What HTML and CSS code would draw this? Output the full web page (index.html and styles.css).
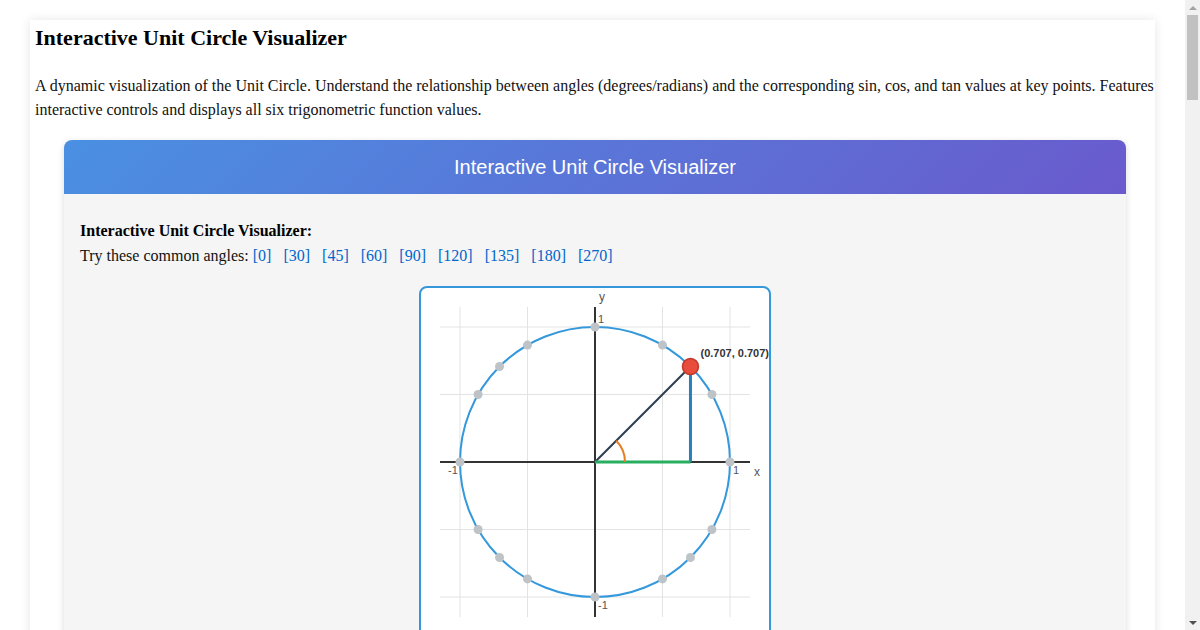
FILE: index.html
```html
<!DOCTYPE html>
<html lang="en">
<head>
<meta charset="utf-8">
<title>Interactive Unit Circle Visualizer</title>
<link rel="stylesheet" href="styles.css">
</head>
<body>
<div class="page">
  <h1 class="title">Interactive Unit Circle Visualizer</h1>
  <p class="intro">A dynamic visualization of the Unit Circle. Understand the relationship between angles (degrees/radians) and the corresponding sin, cos, and tan values at key points. Features interactive controls and displays all six trigonometric function values.</p>

  <div class="widget">
    <div class="widget-header">Interactive Unit Circle Visualizer</div>
    <div class="widget-body">
      <div class="prompt">
        <div class="prompt-title">Interactive Unit Circle Visualizer:</div>
        <div class="prompt-line">Try these common angles: <a href="#" class="angle">[0]</a> <a href="#" class="angle">[30]</a> <a href="#" class="angle">[45]</a> <a href="#" class="angle">[60]</a> <a href="#" class="angle">[90]</a> <a href="#" class="angle">[120]</a> <a href="#" class="angle">[135]</a> <a href="#" class="angle">[180]</a> <a href="#" class="angle">[270]</a></div>
      </div>

      <div class="circle-box">
        <svg class="circle-svg" width="348" height="348" viewBox="0 0 348 348" xmlns="http://www.w3.org/2000/svg">
          <g class="grid">
            <line x1="39" y1="19" x2="39" y2="329"/>
            <line x1="106.5" y1="19" x2="106.5" y2="329"/>
            <line x1="241.5" y1="19" x2="241.5" y2="329"/>
            <line x1="309" y1="19" x2="309" y2="329"/>
            <line x1="19" y1="39" x2="329" y2="39"/>
            <line x1="19" y1="106.5" x2="329" y2="106.5"/>
            <line x1="19" y1="241.5" x2="329" y2="241.5"/>
            <line x1="19" y1="309" x2="329" y2="309"/>
          </g>
          <g class="axes">
            <line x1="19" y1="174" x2="329" y2="174"/>
            <line x1="174" y1="19" x2="174" y2="329"/>
          </g>
          <circle class="unit" cx="174" cy="174" r="135"/>
          <g class="dots">
            <circle cx="309" cy="174" r="4.5"/>
            <circle cx="290.91" cy="106.5" r="4.5"/>
            <circle cx="269.46" cy="78.54" r="4.5"/>
            <circle cx="241.5" cy="57.09" r="4.5"/>
            <circle cx="174" cy="39" r="4.5"/>
            <circle cx="106.5" cy="57.09" r="4.5"/>
            <circle cx="78.54" cy="78.54" r="4.5"/>
            <circle cx="57.09" cy="106.5" r="4.5"/>
            <circle cx="39" cy="174" r="4.5"/>
            <circle cx="57.09" cy="241.5" r="4.5"/>
            <circle cx="78.54" cy="269.46" r="4.5"/>
            <circle cx="106.5" cy="290.91" r="4.5"/>
            <circle cx="174" cy="309" r="4.5"/>
            <circle cx="241.5" cy="290.91" r="4.5"/>
            <circle cx="269.46" cy="269.46" r="4.5"/>
            <circle cx="290.91" cy="241.5" r="4.5"/>
          </g>
          <line class="radius" x1="174" y1="174" x2="269.46" y2="78.54"/>
          <line class="sin" x1="269.46" y1="174" x2="269.46" y2="78.54"/>
          <line class="cos" x1="174" y1="174" x2="269.46" y2="174"/>
          <path class="arc" d="M204 174 A30 30 0 0 0 195.21 152.79"/>
          <circle class="point" cx="269.46" cy="78.54" r="8"/>
          <text class="pt-label" x="279.5" y="68.5">(0.707, 0.707)</text>
          <text class="ax-label" x="333" y="188">x</text>
          <text class="ax-label" x="178" y="13">y</text>
          <text class="tick" x="177" y="35">1</text>
          <text class="tick" x="177" y="321">-1</text>
          <text class="tick" x="312" y="186">1</text>
          <text class="tick" x="27" y="186">-1</text>
        </svg>
      </div>

      <div class="controls">
        <label class="ctrl-label">Angle (degrees): <span class="ctrl-value">45°</span></label>
        <div class="slider"><div class="slider-fill"></div></div>
        <table class="values">
          <tr><th>sin θ</th><td>0.707</td><th>csc θ</th><td>1.414</td></tr>
          <tr><th>cos θ</th><td>0.707</td><th>sec θ</th><td>1.414</td></tr>
          <tr><th>tan θ</th><td>1.000</td><th>cot θ</th><td>1.000</td></tr>
        </table>
      </div>
    </div>
  </div>
</div>

<div class="scrollbar" aria-hidden="true">
  <div class="sb-arrow sb-up"></div>
  <div class="sb-track"><div class="sb-thumb"></div></div>
  <div class="sb-arrow sb-down"></div>
</div>
</body>
</html>
```

FILE: styles.css
```css
html, body {
  margin: 0;
  padding: 0;
  background: #ffffff;
}

body {
  padding: 20px 45px 20px 30px;
  font-family: "Liberation Serif", "Times New Roman", serif;
  color: #111;
}

.page {
  background: #fff;
  padding: 5px 0 40px 5px;
  box-shadow: 0 0 10px rgba(0, 0, 0, 0.1);
}

.title {
  margin: 0 0 24px 0;
  font-size: 22px;
  line-height: 25px;
  font-weight: bold;
  color: #000;
}

.intro {
  margin: 0;
  font-size: 16px;
  line-height: 24px;
  color: #111;
}

.widget {
  margin: 18px 29px 0 29px;
  border-radius: 8px;
  background: #f5f5f5;
  box-shadow: 0 2px 6px rgba(0, 0, 0, 0.15);
}

.widget-header {
  background: linear-gradient(135deg, #4a90e2 0%, #6a5acd 100%);
  color: #fff;
  font-family: "Liberation Sans", Arial, sans-serif;
  font-size: 20px;
  line-height: 24px;
  padding: 15px 20px;
  text-align: center;
  border-radius: 8px 8px 0 0;
}

.widget-body {
  padding: 24px 16px 40px 16px;
  min-height: 3900px;
}

.prompt {
  font-size: 16px;
  line-height: 25px;
  color: #111;
}

.prompt-title {
  font-weight: bold;
  color: #000;
}

.angle {
  color: #0066cc;
  text-decoration: none;
  margin: 0 4px;
}

.angle:first-child {
  margin-left: 0;
}

.circle-box {
  width: 348px;
  margin: 18px auto 0 auto;
  border: 2px solid #3498db;
  border-radius: 8px;
  background: #fff;
  display: flex;
}

.circle-svg {
  display: block;
}

.grid line {
  stroke: #e3e3e3;
  stroke-width: 1;
}

.axes line {
  stroke: #333;
  stroke-width: 2;
}

.unit {
  fill: none;
  stroke: #3498db;
  stroke-width: 2;
}

.dots circle {
  fill: #bdc3c7;
}

.radius {
  stroke: #2c3e50;
  stroke-width: 2;
}

.sin {
  stroke: #2980b9;
  stroke-width: 3;
}

.cos {
  stroke: #27ae60;
  stroke-width: 3;
}

.arc {
  fill: none;
  stroke: #e67e22;
  stroke-width: 2;
}

.point {
  fill: #e74c3c;
  stroke: #c0392b;
  stroke-width: 1.5;
}

.pt-label {
  font-family: "Liberation Sans", Arial, sans-serif;
  font-size: 11px;
  font-weight: bold;
  fill: #333;
}

.ax-label {
  font-family: "Liberation Sans", Arial, sans-serif;
  font-size: 12px;
  fill: #555;
}

.tick {
  font-family: "Liberation Sans", Arial, sans-serif;
  font-size: 11px;
  fill: #555;
}

.controls {
  width: 500px;
  margin: 24px auto 0 auto;
  font-family: "Liberation Sans", Arial, sans-serif;
  font-size: 14px;
  color: #333;
}

.ctrl-label {
  display: block;
  margin-bottom: 8px;
}

.ctrl-value {
  font-weight: bold;
}

.slider {
  height: 6px;
  background: #ddd;
  border-radius: 3px;
  margin-bottom: 20px;
}

.slider-fill {
  width: 12.5%;
  height: 100%;
  background: #4a90e2;
  border-radius: 3px;
}

.values {
  width: 100%;
  border-collapse: collapse;
  background: #fff;
}

.values th,
.values td {
  border: 1px solid #ddd;
  padding: 6px 10px;
  text-align: left;
}

/* Browser scrollbar rendered over the right edge of the viewport */
.scrollbar {
  position: fixed;
  top: 0;
  right: 0;
  width: 15px;
  height: 100%;
  background: #f1f1f1;
  display: flex;
  flex-direction: column;
}

.sb-arrow {
  height: 15px;
  flex: none;
  display: flex;
  align-items: center;
  justify-content: center;
}

.sb-up::before {
  content: "";
  border-left: 4px solid transparent;
  border-right: 4px solid transparent;
  border-bottom: 4px solid #a3a3a3;
}

.sb-down::before {
  content: "";
  border-left: 4px solid transparent;
  border-right: 4px solid transparent;
  border-top: 4px solid #505050;
}

.sb-track {
  flex: 1;
  padding: 0 2px;
}

.sb-thumb {
  height: 85px;
  background: #c1c1c1;
}
```
